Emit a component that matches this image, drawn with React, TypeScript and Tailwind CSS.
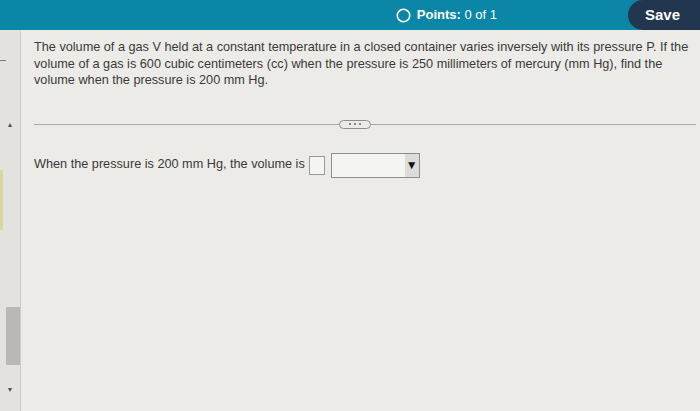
import { Circle } from 'lucide-react'

export default function App() {
  return (
    <div className="w-[700px] h-[411px] overflow-hidden bg-[#ecebe7] flex flex-col font-['Liberation_Sans',Arial,sans-serif] text-[#3a3a3a]">
      <header className="h-[30px] shrink-0 bg-[#0c86a6] flex items-center">
        <div className="flex-1" />
        <div className="flex items-center gap-[6px] text-white text-[13px] mr-[131px]">
          <Circle size={15} strokeWidth={2.5} />
          <span>
            <b>Points:</b> 0 of 1
          </span>
        </div>
        <button
          type="button"
          className="h-[30px] w-[72px] rounded-l-full bg-[#223650] text-white text-[15px] font-bold pl-[17px] text-left"
        >
          Save
        </button>
      </header>

      <div className="flex flex-1 min-h-0">
        <aside className="w-[21px] shrink-0 bg-[#e3e2df] border-r border-[#cfcecb] flex flex-col items-center relative">
          <div className="absolute left-0 top-[140px] h-[60px] w-[3px] bg-[#d9d6a0]" />
          <div className="absolute left-0 top-[30px] h-px w-[6px] bg-[#777]" />
          <span className="mt-[90px] text-[7px] text-[#555]">▲</span>
          <div className="mt-[176px] w-[14px] h-[58px] bg-[#b9b8b5] self-end" />
          <span className="mt-[20px] text-[7px] text-[#555]">▼</span>
        </aside>

        <main className="flex-1 pl-[13px] pr-[4px]">
          <p className="mt-[9px] text-[12.7px] leading-[16.5px] whitespace-nowrap">
            The volume of a gas V held at a constant temperature in a closed container varies inversely with its pressure P. If the
            <br />
            volume of a gas is 600 cubic centimeters (cc) when the pressure is 250 millimeters of mercury (mm Hg), find the
            <br />
            volume when the pressure is 200 mm Hg.
          </p>

          <div className="mt-[31px] flex items-center">
            <div className="w-[305px] h-px bg-[#aaa9a5]" />
            <div className="h-[9px] w-[32px] rounded-full border border-[#8f8f8c] flex items-center justify-center gap-[3px]">
              <span className="w-[2px] h-[2px] rounded-full bg-[#666]" />
              <span className="w-[2px] h-[2px] rounded-full bg-[#666]" />
              <span className="w-[2px] h-[2px] rounded-full bg-[#666]" />
            </div>
            <div className="flex-1 h-px bg-[#aaa9a5]" />
          </div>

          <div className="mt-[24px] flex items-center text-[12.7px]">
            <span>When the pressure is 200 mm Hg, the volume is</span>
            <span className="ml-[4px] w-[16px] h-[19px] border border-[#9a9a98] bg-[#f4f4f2]" />
            <div className="ml-[6px] w-[89px] h-[25px] border border-[#8e8e8c] bg-[#f4f4f2] flex justify-end">
              <div className="w-[14px] h-full bg-[#dcdcda] flex items-center justify-center text-[12px] text-[#111]">▼</div>
            </div>
          </div>
        </main>
      </div>
    </div>
  )
}
